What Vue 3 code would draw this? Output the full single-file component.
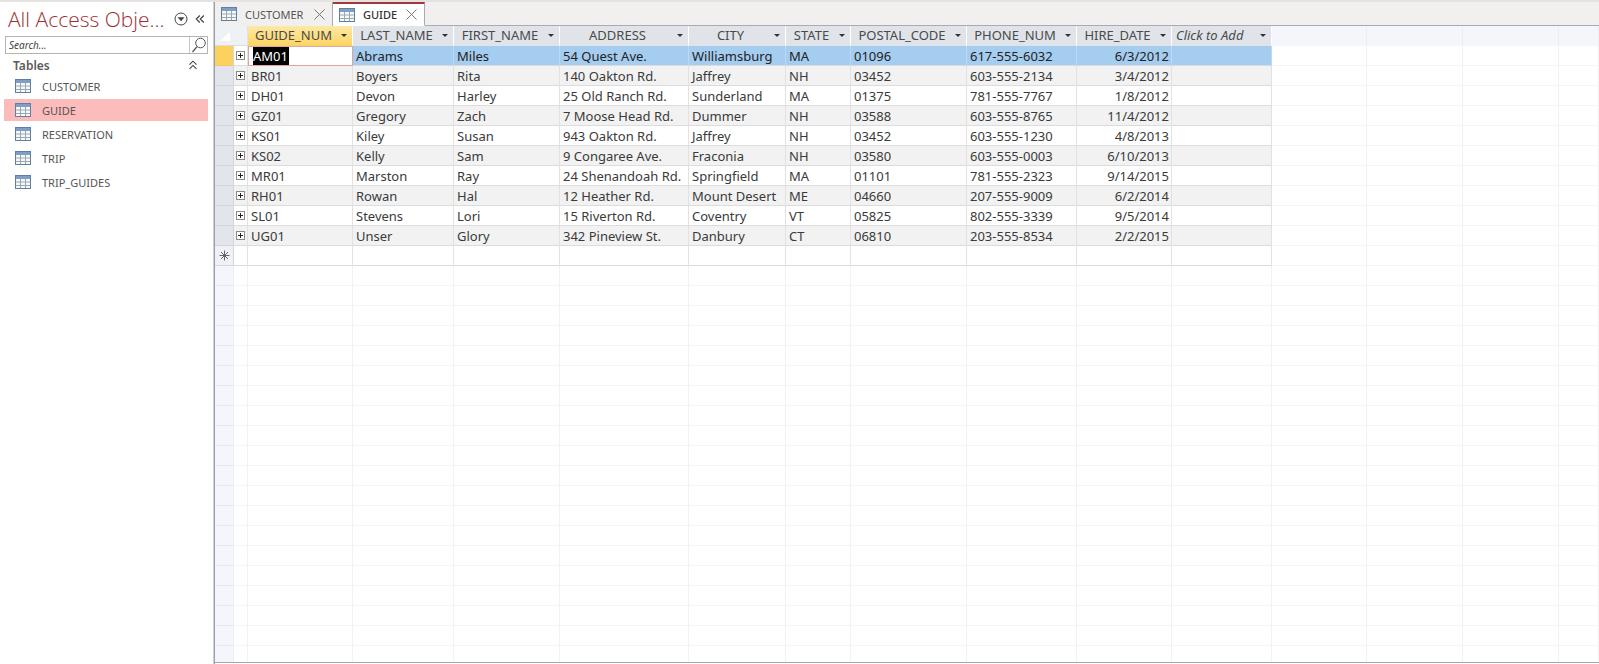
<template>
  <div class="app">
    <!-- navigation pane -->
    <aside class="nav">
      <div class="nav-title">
        <span class="title-text">All Access Obje...</span>
        <svg class="title-btn" width="14" height="14" viewBox="0 0 14 14">
          <circle cx="7" cy="7" r="6" fill="none" stroke="#444" stroke-width="1" />
          <path d="M3.5 5.2h7L7 9.2z" fill="#444" />
        </svg>
        <svg class="title-btn" width="10" height="10" viewBox="0 0 10 10">
          <path d="M4.8 1.5 1.3 5l3.5 3.5M8.8 1.5 5.3 5l3.5 3.5" fill="none" stroke="#444" stroke-width="1.2" />
        </svg>
      </div>
      <div class="search">
        <span class="search-text">Search...</span>
        <span class="search-btn">
          <svg width="17" height="17" viewBox="0 0 17 17">
            <circle cx="10.5" cy="6" r="4.8" fill="none" stroke="#555" stroke-width="1" />
            <path d="M7 9.6 2.5 15" stroke="#555" stroke-width="1.3" />
          </svg>
        </span>
      </div>
      <div class="group">
        <span>Tables</span>
        <svg width="10" height="10" viewBox="0 0 10 10">
          <path d="M1.5 4.6 5 1.2l3.5 3.4M1.5 8.8 5 5.4l3.5 3.4" fill="none" stroke="#444" stroke-width="1.1" />
        </svg>
      </div>
      <div v-for="t in tables" :key="t" class="nav-item" :class="{ active: t === 'GUIDE' }">
        <svg class="tbl-icon" width="16" height="14" viewBox="0 0 16 14">
          <rect x="0.5" y="0.5" width="15" height="13" fill="#fdf9ea" stroke="#5f7fa8" />
          <rect x="1" y="1" width="14" height="3" fill="#7f9fc9" />
          <path d="M1 7h14M1 10.5h14M5.5 4v9M10.5 4v9" stroke="#8ea8c8" stroke-width="1" />
        </svg>
        <span>{{ t }}</span>
      </div>
    </aside>

    <main class="content">
      <!-- document tabs -->
      <div class="tabs">
        <div v-for="t in ['CUSTOMER', 'GUIDE']" :key="t" class="tab" :class="{ current: t === 'GUIDE' }">
          <svg class="tbl-icon" width="16" height="14" viewBox="0 0 16 14">
            <rect x="0.5" y="0.5" width="15" height="13" fill="#fdf9ea" stroke="#5f7fa8" />
            <rect x="1" y="1" width="14" height="3" fill="#7f9fc9" />
            <path d="M1 7h14M1 10.5h14M5.5 4v9M10.5 4v9" stroke="#8ea8c8" stroke-width="1" />
          </svg>
          <span class="tab-name">{{ t }}</span>
          <svg class="tab-x" width="11" height="11" viewBox="0 0 11 11">
            <path d="M0.5 0.5l10 10M10.5 0.5l-10 10" stroke="#777" stroke-width="1" />
          </svg>
        </div>
      </div>

      <!-- datasheet -->
      <div class="sheet">
        <div class="row head">
          <div class="cell corner"><span class="corner-mark"></span></div>
          <div
            v-for="(c, i) in columns"
            :key="c"
            class="cell hcell"
            :class="{ sel: i === 0, add: c === 'Click to Add' }">
            <span class="hname">{{ c }}</span>
            <span class="arrow"></span>
          </div>
          <div v-for="n in 4" :key="n" class="cell hblank"></div>
        </div>

        <div v-for="(r, ri) in rows" :key="r[0]" class="row" :class="{ alt: ri % 2 === 1, first: ri === 0 }">
          <div class="cell selector"></div>
          <div class="cell expand"><span class="plus"></span></div>
          <div
            v-for="(v, ci) in r"
            :key="ci"
            class="cell data"
            :class="{ current: ri === 0 && ci === 0, right: ci === 8 }">
            <span v-if="ri === 0 && ci === 0" class="picked">{{ v }}</span>
            <template v-else>{{ v }}</template>
          </div>
          <div class="cell data"></div>
          <div v-for="n in 4" :key="n" class="cell blank"></div>
        </div>

        <div class="row newrow">
          <div class="cell selector star">
            <svg width="11" height="11" viewBox="0 0 11 11">
              <path d="M5.5 0.5v10M0.5 5.5h10M2 2l7 7M9 2l-7 7" stroke="#666" stroke-width="1" />
            </svg>
          </div>
          <div class="cell data"></div>
          <div v-for="n in 10" :key="n" class="cell data"></div>
          <div v-for="n in 4" :key="'b' + n" class="cell blank"></div>
        </div>

        <div v-for="n in 20" :key="'e' + n" class="row empty">
          <div class="cell eselector"></div>
          <div v-for="m in 15" :key="m" class="cell blank"></div>
        </div>
      </div>
    </main>
  </div>
</template>

<script setup>
const tables = ['CUSTOMER', 'GUIDE', 'RESERVATION', 'TRIP', 'TRIP_GUIDES']

const columns = [
  'GUIDE_NUM', 'LAST_NAME', 'FIRST_NAME', 'ADDRESS', 'CITY', 'STATE',
  'POSTAL_CODE', 'PHONE_NUM', 'HIRE_DATE', 'Click to Add'
]

const rows = [
  ['AM01', 'Abrams', 'Miles', '54 Quest Ave.', 'Williamsburg', 'MA', '01096', '617-555-6032', '6/3/2012'],
  ['BR01', 'Boyers', 'Rita', '140 Oakton Rd.', 'Jaffrey', 'NH', '03452', '603-555-2134', '3/4/2012'],
  ['DH01', 'Devon', 'Harley', '25 Old Ranch Rd.', 'Sunderland', 'MA', '01375', '781-555-7767', '1/8/2012'],
  ['GZ01', 'Gregory', 'Zach', '7 Moose Head Rd.', 'Dummer', 'NH', '03588', '603-555-8765', '11/4/2012'],
  ['KS01', 'Kiley', 'Susan', '943 Oakton Rd.', 'Jaffrey', 'NH', '03452', '603-555-1230', '4/8/2013'],
  ['KS02', 'Kelly', 'Sam', '9 Congaree Ave.', 'Fraconia', 'NH', '03580', '603-555-0003', '6/10/2013'],
  ['MR01', 'Marston', 'Ray', '24 Shenandoah Rd.', 'Springfield', 'MA', '01101', '781-555-2323', '9/14/2015'],
  ['RH01', 'Rowan', 'Hal', '12 Heather Rd.', 'Mount Desert', 'ME', '04660', '207-555-9009', '6/2/2014'],
  ['SL01', 'Stevens', 'Lori', '15 Riverton Rd.', 'Coventry', 'VT', '05825', '802-555-3339', '9/5/2014'],
  ['UG01', 'Unser', 'Glory', '342 Pineview St.', 'Danbury', 'CT', '06810', '203-555-8534', '2/2/2015']
]
</script>

<style>
html, body {
  margin: 0;
  background: #fff;
}
</style>

<style scoped>
.app {
  display: flex;
  width: 1599px;
  height: 664px;
  overflow: hidden;
  font-family: "Noto Sans", "Open Sans", sans-serif;
  font-size: 13px;
  color: #3a3a3a;
  background: #fff;
  border-top: 2px solid #e4e3e1;
  box-sizing: border-box;
}

.nav {
  width: 214px;
  flex: none;
  box-sizing: border-box;
  padding: 0 5px;
  border-right: 1px solid #d0d0d4;
}

.nav-title {
  display: flex;
  align-items: center;
  height: 34px;
  padding: 0 3px;
}

.title-text {
  flex: 1;
  font-family: "Open Sans", sans-serif;
  font-weight: 300;
  font-size: 21px;
  color: #9c2f33;
  white-space: nowrap;
}

.title-btn {
  margin-left: 7px;
}

.search {
  display: flex;
  align-items: center;
  box-sizing: border-box;
  height: 18px;
  border: 1px solid #b4b4b4;
}

.search-text {
  flex: 1;
  padding-left: 3px;
  font-size: 10px;
  font-style: italic;
  color: #444;
}

.search-btn {
  display: flex;
  align-items: center;
  justify-content: center;
  width: 17px;
  height: 16px;
  border-left: 1px solid #c8c8c8;
}

.group {
  display: flex;
  align-items: center;
  justify-content: space-between;
  height: 18px;
  margin-top: 2px;
  padding: 0 10px 0 8px;
  font-weight: 600;
  font-size: 12px;
  color: #5a5a5a;
}

.nav-item {
  display: flex;
  align-items: center;
  height: 24px;
  margin-left: -1px;
  padding-left: 11px;
  font-size: 11px;
  color: #555;
}

.nav-item span {
  margin-left: 11px;
}

.nav-item.active {
  background: #fdbcbc;
  height: 22px;
  margin-top: 1px;
  margin-bottom: 1px;
}

.tbl-icon {
  flex: none;
}

.content {
  flex: 1;
  min-width: 0;
  display: flex;
  flex-direction: column;
  border-left: 1px solid #9aa0aa;
}

.tabs {
  display: flex;
  height: 24px;
  flex: none;
  background: #f1f0ee;
  border-bottom: 1px solid #a9abb4;
  box-sizing: border-box;
}

.tab {
  display: flex;
  align-items: center;
  box-sizing: border-box;
  height: 24px;
  padding: 0 7px 0 6px;
  width: 118px;
  font-size: 11px;
  color: #555;
  border-right: 1px solid #a9abb4;
  background: #f1f0ee;
}

.tab-name {
  flex: 1;
  margin-left: 8px;
}

.tab.current {
  width: 92px;
  color: #333;
  font-weight: 500;
  background: #fff;
  border-top: 2px solid #a4373a;
  border-bottom: 1px solid #fff;
}

.sheet {
  flex: 1;
  min-height: 0;
  overflow: hidden;
  border-bottom: 1px solid #a5a7ae;
  margin-bottom: 1px;
}

.row {
  display: grid;
  grid-template-columns: 19px 14px 105px 101px 106px 129px 97px 65px 116px 110px 95px 100px 95px 96px 96px 40px;
  height: 20px;
}

.row.head {
  grid-template-columns: 33px 105px 101px 106px 129px 97px 65px 116px 110px 95px 100px 95px 96px 96px 40px;
}

.cell {
  box-sizing: border-box;
  min-width: 0;
  white-space: nowrap;
  overflow: hidden;
  line-height: 21px;
  border-right: 1px solid #e2e2e2;
  border-bottom: 1px solid #dcdcdc;
}

.corner {
  position: relative;
  background: #f0f1f5;
}

.corner-mark {
  position: absolute;
  left: 5px;
  top: 6px;
  width: 0;
  height: 0;
  border-left: 10px solid transparent;
  border-bottom: 9px solid #fff;
}

.hcell {
  display: flex;
  align-items: center;
  background: #e0e4e9;
  padding: 0 5px 0 4px;
  border-right-color: #fff;
  border-bottom-color: #e0e4e9;
  font-size: 13px;
  line-height: 19px;
  color: #4a4a4a;
}

.hcell.sel {
  background: linear-gradient(#fde9a5, #fcd464);
  border-bottom-color: #fcd464;
}

.hname {
  flex: 1;
  text-align: center;
}

.hcell.add {
  font-style: italic;
}

.hcell.add .hname {
  text-align: left;
}

.arrow {
  flex: none;
  width: 0;
  height: 0;
  margin-left: 6px;
  border-left: 3px solid transparent;
  border-right: 3px solid transparent;
  border-top: 3px solid #333;
}

.hblank {
  background: #f5f6fc;
  border-right-color: #eceef4;
  border-bottom-color: #f5f6fc;
}

.selector {
  background: #e3e5ec;
  border-right-color: #d4d6de;
  border-bottom-color: #d4d6de;
}

.first .selector {
  background: #fbd15f;
  border-bottom-color: #eccb72;
}

.star {
  display: flex;
  align-items: center;
  justify-content: center;
  background: #f0f1f6;
}

.eselector {
  background: #f5f6fc;
  border-right-color: #eceef4;
  border-bottom-color: #e7e9f1;
}

.expand {
  display: flex;
  align-items: center;
  justify-content: center;
  padding-bottom: 1px;
}

.plus {
  position: relative;
  display: block;
  box-sizing: border-box;
  width: 9px;
  height: 9px;
  border: 1px solid #8a8a8a;
  background: #fff;
}

.plus::before {
  content: "";
  position: absolute;
  left: 1px;
  top: 3px;
  width: 5px;
  height: 1px;
  background: #222;
}

.plus::after {
  content: "";
  position: absolute;
  left: 3px;
  top: 1px;
  width: 1px;
  height: 5px;
  background: #222;
}

.data {
  padding: 0 2px 0 3px;
}

.right {
  text-align: right;
}

.alt .data,
.alt .expand {
  background: #f2f2f2;
}

.first .data {
  background: #a5cdf0;
  color: #222;
  border-right-color: #bcd9f3;
}

.first .data.current {
  background: #fff;
  border: 1px solid #dfa5a5;
  padding: 0 2px 0 4px;
  line-height: 18px;
}

.picked {
  display: inline-block;
  background: #000;
  color: #fff;
  line-height: 18px;
  padding-right: 1px;
}

.blank {
  border-right-color: #f2f2f4;
  border-bottom-color: #f5f5f7;
}
</style>
